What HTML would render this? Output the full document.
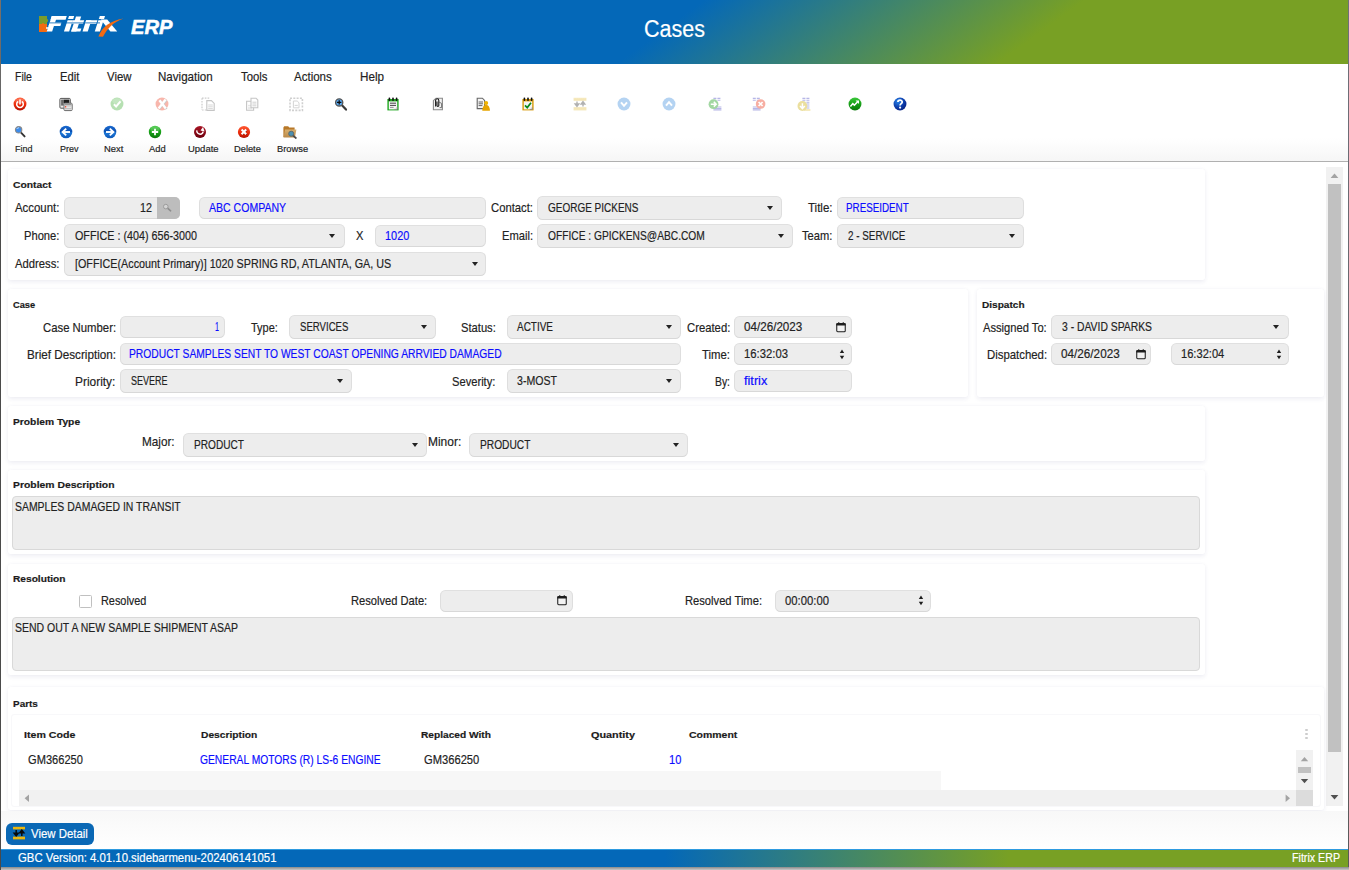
<!DOCTYPE html>
<html><head><meta charset="utf-8"><title>Cases</title>
<style>
html,body{margin:0;padding:0;}
body{width:1349px;height:870px;overflow:hidden;position:relative;background:#fff;
 font-family:"Liberation Sans",sans-serif;font-size:13px;color:#222;}
div,span,svg{position:absolute;box-sizing:border-box;}
svg{overflow:visible;}
.t{white-space:nowrap;display:block;line-height:16px;transform-origin:0 50%;-webkit-text-stroke:.18px currentColor;}
.hdr{background:linear-gradient(144deg,#0468b8 49%,#78a024 75.5%);}
.g{background:#fff;border-radius:2.5px;box-shadow:0 1.5px 4px rgba(40,40,110,.08),0 0 1px rgba(40,40,110,.04);}
.f{background:#ededed;border:1px solid #dedede;border-color:#e0e0e0 #dedede #d8d8d8 #dedede;border-radius:5.5px;}
.ta{background:#ededed;border:1px solid #d9d9d9;border-radius:4px;}
.arr{width:0;height:0;border-left:3.5px solid transparent;border-right:3.5px solid transparent;border-top:4px solid #222;}
</style></head><body>
<svg width="0" height="0" style="left:0;top:0"><defs>
<linearGradient id="gRed" x1="0" y1="0" x2="0" y2="1"><stop offset="0" stop-color="#ff5a34"/><stop offset=".6" stop-color="#e82808"/><stop offset="1" stop-color="#b01000"/></linearGradient>
<linearGradient id="gBlue" x1="0" y1="0" x2="0" y2="1"><stop offset="0" stop-color="#1a6ad0"/><stop offset=".5" stop-color="#0a4eb0"/><stop offset=".55" stop-color="#1c78d8"/><stop offset="1" stop-color="#0e58b8"/></linearGradient>
<linearGradient id="gGreen" x1="0" y1="0" x2="0" y2="1"><stop offset="0" stop-color="#3cc83c"/><stop offset=".5" stop-color="#18a018"/><stop offset="1" stop-color="#0a780a"/></linearGradient>
<linearGradient id="gDRed" x1="0" y1="0" x2="0" y2="1"><stop offset="0" stop-color="#a81424"/><stop offset="1" stop-color="#6c000c"/></linearGradient>
<radialGradient id="gHelp" cx=".35" cy=".3" r=".8"><stop offset="0" stop-color="#2a86ea"/><stop offset=".6" stop-color="#0c3aa8"/><stop offset="1" stop-color="#08207c"/></radialGradient>
<linearGradient id="gFold" x1="0" y1="0" x2="0" y2="1"><stop offset="0" stop-color="#d8b070"/><stop offset="1" stop-color="#b88848"/></linearGradient>
</defs></svg>
<div class="hdr" style="left:0px;top:0px;width:1349px;height:64px;"></div>
<span class="t" style="left:644.20px;top:20.6px;font-size:23.5px;color:#fff;transform:scaleX(0.9156);">Cases</span>
<div style="left:38.9px;top:16px;width:8.2px;height:8.1px;background:#7a9c2c;"></div>
<div style="left:38.9px;top:24.1px;width:8.2px;height:7.6px;background:#f26a12;"></div>
<div style="left:46.2px;top:19.2px;width:2.2px;height:2.4px;background:#7a9c2c;border-radius:1px;"></div>
<div style="left:45.6px;top:26.6px;width:2.2px;height:2.4px;background:#fff;border-radius:1px;"></div>
<div style="left:41.5px;top:22.8px;width:2.4px;height:2.2px;background:#f26a12;border-radius:1px;"></div>
<svg style="left:0;top:0" width="180" height="44" viewBox="0 0 180 44"><g transform="translate(51.8,16) skewX(-18)" fill="#fff"><rect x="0" y="0" width="5.4" height="15.6"/><rect x="0" y="0" width="15" height="3.8"/><rect x="0" y="6.5" width="11.8" height="3.4"/><rect x="17.2" y="0" width="5.2" height="2.9"/><rect x="17.2" y="4.3" width="5.2" height="11.3"/><rect x="24.4" y="0.6" width="5.2" height="15"/><rect x="22.2" y="4.3" width="11.6" height="3.4"/><rect x="24.4" y="12.4" width="9.2" height="3.2"/><rect x="35.8" y="4.3" width="5.2" height="11.3"/><rect x="35.8" y="4.3" width="11.2" height="3.7"/><rect x="48" y="0" width="5.2" height="2.9"/><rect x="48" y="4.3" width="5.2" height="11.3"/></g><path d="M100.6 19.6 H107.2 L117.2 31.6 H110.4 Z" fill="#fff"/><path d="M47 22.9 H100" stroke="#0468b8" stroke-width=".9" opacity=".9"/><path d="M98.4 36.6 C102 27 110 20.5 123.4 18.4 C113.5 22 107.5 28 103 36.8 Z" fill="#f26a12"/></svg>
<span class="t" style="left:131.40px;top:19.3px;font-size:20.8px;font-weight:700;font-style:italic;color:#fff;-webkit-text-stroke:.55px #fff;transform:scaleX(0.9685);">ERP</span>
<span class="t" style="left:15.30px;top:68.6px;transform:scaleX(0.8062);">File</span>
<span class="t" style="left:60.00px;top:68.6px;transform:scaleX(0.8619);">Edit</span>
<span class="t" style="left:106.70px;top:68.6px;transform:scaleX(0.8755);">View</span>
<span class="t" style="left:158.40px;top:68.6px;transform:scaleX(0.8905);">Navigation</span>
<span class="t" style="left:240.60px;top:68.6px;transform:scaleX(0.8697);">Tools</span>
<span class="t" style="left:294.20px;top:68.6px;transform:scaleX(0.8865);">Actions</span>
<span class="t" style="left:359.50px;top:68.6px;transform:scaleX(0.8973);">Help</span>
<div style="left:1px;top:138px;width:1347px;height:23px;background:linear-gradient(#fff,#f6f6f6);"></div>
<div style="left:0px;top:161px;width:1349px;height:1px;background:#b0b0b0;"></div>
<span class="t" style="left:14.70px;top:140.8px;font-size:9.7px;transform:scaleX(0.9276);">Find</span>
<span class="t" style="left:59.50px;top:140.8px;font-size:9.7px;transform:scaleX(0.9281);">Prev</span>
<span class="t" style="left:103.70px;top:140.8px;font-size:9.7px;transform:scaleX(0.9682);">Next</span>
<span class="t" style="left:149.20px;top:140.8px;font-size:9.7px;transform:scaleX(0.9672);">Add</span>
<span class="t" style="left:187.60px;top:140.8px;font-size:9.7px;transform:scaleX(0.9782);">Update</span>
<span class="t" style="left:233.80px;top:140.8px;font-size:9.7px;transform:scaleX(0.9596);">Delete</span>
<span class="t" style="left:276.60px;top:140.8px;font-size:9.7px;transform:scaleX(0.9645);">Browse</span>
<svg style="left:12.4px;top:96.3px;" width="16" height="16" viewBox="0 0 16 16"><circle cx="8" cy="8" r="6.45" fill="url(#gRed)"/><ellipse cx="8" cy="5" rx="4.6" ry="2.8" fill="#fff" opacity=".18"/><path d="M5.7 5.9 A3.3 3.3 0 1 0 10.3 5.9" stroke="#fff" stroke-width="1.5" fill="none" stroke-linecap="round"/><path d="M8 3.9 V8.1" stroke="#fff" stroke-width="1.5" stroke-linecap="round"/></svg>
<svg style="left:57.5px;top:96.3px;" width="16" height="16" viewBox="0 0 16 16"><rect x="1.9" y="2.4" width="10.4" height="9.8" rx="1" fill="#ececec" stroke="#555" stroke-width="1"/><rect x="3.1" y="3.6" width="2.6" height="6" fill="#6a6a6a"/><rect x="5.7" y="3.6" width="5.6" height="3.4" fill="#1c1c1c"/><rect x="6" y="7.2" width="8.2" height="7.4" rx="1" fill="#fafafa" stroke="#6a6a6a" stroke-width="1"/><rect x="6.5" y="7.7" width="7.2" height="1.8" fill="#9a9a9a"/><rect x="7" y="10.2" width="1.4" height="1.3" fill="#e03018"/><rect x="8.8" y="10.4" width="4.4" height=".9" fill="#bbb"/><rect x="7" y="12.4" width="6.2" height=".9" fill="#999"/></svg>
<svg style="left:109.2px;top:96.3px;opacity:0.55;" width="16" height="16" viewBox="0 0 16 16"><circle cx="8" cy="8" r="6.45" fill="#7cc874"/><ellipse cx="8" cy="5" rx="4.6" ry="2.8" fill="#fff" opacity=".18"/><path d="M4.9 8.3 L7.1 10.5 L11.5 5.3" stroke="#fff" stroke-width="2" fill="none"/></svg>
<svg style="left:154.4px;top:96.3px;opacity:0.45;" width="16" height="16" viewBox="0 0 16 16"><circle cx="8" cy="8" r="6.45" fill="#f06048"/><path d="M6.2 4.6 L12.6 13 M12.4 4 L5.4 12.8" stroke="#8a8a8a" stroke-width="2.2" fill="none"/><path d="M5.4 4.2 L11.8 12.6 M11.6 3.6 L4.6 12.4" stroke="#fff" stroke-width="2.4" fill="none"/></svg>
<svg style="left:199.5px;top:96.3px;opacity:0.42;" width="16" height="16" viewBox="0 0 16 16"><path d="M2 2.2 H10 M2 2.2 V14 M2 14 H6" stroke="#888" stroke-width="1.2" stroke-dasharray="1.6 1.2" fill="none"/><path d="M6.8 4.6 H11.4 L14.2 7.4 V14.4 H6.8 Z" fill="#fff" stroke="#777" stroke-width="1.1"/><path d="M8.2 9 H12.8 M8.2 10.8 H12.8 M8.2 12.6 H12.8" stroke="#999" stroke-width=".9"/></svg>
<svg style="left:244px;top:96.3px;opacity:0.42;" width="16" height="16" viewBox="0 0 16 16"><path d="M2.6 5.2 H8 L9.6 6.8 V14.2 H2.6 Z" fill="#fff" stroke="#777" stroke-width="1.1"/><path d="M4 9.4 H8.2 M4 11.2 H8.2 M4 12.8 H8.2" stroke="#aaa" stroke-width=".8"/><path d="M7 2.2 H12 L13.8 4 V11.8 H7 Z" fill="#fff" stroke="#777" stroke-width="1.1"/><path d="M8.4 6.2 H12.4 M8.4 8 H12.4 M8.4 9.8 H12.4" stroke="#888" stroke-width=".9"/></svg>
<svg style="left:288.4px;top:96.3px;opacity:0.4;" width="16" height="16" viewBox="0 0 16 16"><rect x="2" y="2.2" width="12.4" height="12.2" fill="none" stroke="#8a8a8a" stroke-width="1.6" stroke-dasharray="2 1.3"/><path d="M5.4 5 H9.2 L11 6.8 V11.8 H5.4 Z" fill="#fff" stroke="#999" stroke-width="1"/><path d="M6.6 9.4 H9.8" stroke="#999" stroke-width="1"/></svg>
<svg style="left:333.2px;top:96.3px;" width="16" height="16" viewBox="0 0 16 16"><path d="M9.2 9.6 L13 13.6" stroke="#3a3a3a" stroke-width="2.2" stroke-linecap="round"/><circle cx="6.2" cy="6.4" r="3.6" fill="#58a8f0" stroke="#555" stroke-width="1.3"/><path d="M6.2 4.2 V8.6 M4 6.4 H8.4" stroke="#0a0a0a" stroke-width="1.3"/></svg>
<svg style="left:385.2px;top:96.3px;" width="16" height="16" viewBox="0 0 16 16"><rect x="2.4" y="3" width="11.2" height="11.4" fill="#1ea81e"/><rect x="3.8" y="5.4" width="8.4" height="8" fill="#f4f4f4"/><rect x="3.6" y="1.4" width="1.6" height="3.6" rx=".7" fill="#111"/><rect x="7.2" y="1.4" width="1.6" height="3.6" rx=".7" fill="#111"/><rect x="10.8" y="1.4" width="1.6" height="3.6" rx=".7" fill="#111"/><path d="M5 7.2 H11 M5 9.4 H11" stroke="#444" stroke-width="1"/><path d="M5 11.4 H8.6" stroke="#888" stroke-width=".9"/><path d="M9.6 13.4 H12.2 V11" stroke="#888" stroke-width=".9" fill="none"/></svg>
<svg style="left:430.2px;top:96.3px;" width="16" height="16" viewBox="0 0 16 16"><path d="M3.4 4.6 L6 2.2 H12.4 V13.8 H3.4 Z" fill="#f2f2f2" stroke="#8a8a8a" stroke-width="1.1"/><path d="M5.6 10.6 V4.4 A1.6 1.6 0 0 1 8.8 4.4 V9.6 A.9 .9 0 0 1 7 9.6 V5.6" stroke="#1a1a1a" stroke-width="1.1" fill="none"/><path d="M9 6 L11.6 7.4 V11.6 H9.6" stroke="#666" stroke-width=".9" fill="none"/></svg>
<svg style="left:475.4px;top:96.3px;" width="16" height="16" viewBox="0 0 16 16"><path d="M2.2 2.2 H7.4 L9.6 4.4 V12.6 H2.2 Z" fill="#f6f6f6" stroke="#666" stroke-width="1.1"/><path d="M3.6 6 H8 M3.6 7.8 H8 M3.6 9.6 H7.4" stroke="#555" stroke-width=".9"/><circle cx="11.1" cy="7" r="2.1" fill="#f0b400"/><path d="M7.3 14.7 C7.3 11 9 8.8 11.1 8.8 C13.2 8.8 14.9 11 14.9 14.7 Z" fill="#e6a400"/></svg>
<svg style="left:520.4px;top:96.3px;" width="16" height="16" viewBox="0 0 16 16"><rect x="2.4" y="3" width="11.2" height="11.4" fill="#d89a08"/><rect x="3.8" y="5.4" width="8.4" height="8" fill="#f4f4f4"/><rect x="3.6" y="1.4" width="1.6" height="3.6" rx=".7" fill="#111"/><rect x="7.2" y="1.4" width="1.6" height="3.6" rx=".7" fill="#111"/><rect x="10.8" y="1.4" width="1.6" height="3.6" rx=".7" fill="#111"/><path d="M5 9.4 L7.2 11.6 L11 6.8" stroke="#0a8a1a" stroke-width="1.7" fill="none"/><path d="M9.8 13.4 H12.2 V11.4" stroke="#888" stroke-width=".9" fill="none"/></svg>
<svg style="left:571.5px;top:96.3px;opacity:0.45;" width="16" height="16" viewBox="0 0 16 16"><rect x="1.6" y="1.8" width="12.8" height="3" fill="#e8c860"/><rect x="1.6" y="11.2" width="12.8" height="3.2" fill="#e8c860"/><path d="M2.4 2.6 H13.6 M2.4 13.2 H13.6" stroke="#f4e090" stroke-width=".7" stroke-dasharray="1 1"/><path d="M5 5.4 V9 M3.2 8 L5 10.4 L6.8 8 Z M11 10.6 V7 M9.2 8 L11 5.6 L12.8 8 Z" stroke="#555" stroke-width="1.4" fill="#555"/></svg>
<svg style="left:616.4px;top:96.3px;opacity:0.55;" width="16" height="16" viewBox="0 0 16 16"><circle cx="8" cy="8" r="6.45" fill="#78b0e8"/><path d="M5 6.4 L8 9.8 L11 6.4" stroke="#fff" stroke-width="2" fill="none"/></svg>
<svg style="left:661.4px;top:96.3px;opacity:0.55;" width="16" height="16" viewBox="0 0 16 16"><circle cx="8" cy="8" r="6.45" fill="#78b0e8"/><path d="M5 9.6 L8 6.2 L11 9.6" stroke="#fff" stroke-width="2" fill="none"/></svg>
<svg style="left:706.5px;top:96.3px;opacity:0.5;" width="16" height="16" viewBox="0 0 16 16"><path d="M6.4 2.4 H14.4 M6.4 4.2 H14.4" stroke="#7070d0" stroke-width="1.1" stroke-dasharray="3 1"/><path d="M6.4 11 H14.4 M6.4 12.6 H14.4 M6.4 14 H14.4" stroke="#7070d0" stroke-width="1.1"/><circle cx="6.5" cy="8.2" r="4.9" fill="#48b048"/><path d="M3.8 8.2 H8.6 M6.8 5.8 L9.2 8.2 L6.8 10.6" stroke="#fff" stroke-width="1.5" fill="none"/></svg>
<svg style="left:751px;top:96.3px;opacity:0.5;" width="16" height="16" viewBox="0 0 16 16"><path d="M1.8 2.4 H9.6 M1.8 4.2 H9.6" stroke="#7070d0" stroke-width="1.1" stroke-dasharray="3 1"/><path d="M1.8 11 H9.6 M1.8 12.6 H9.6 M1.8 14 H9.6" stroke="#7070d0" stroke-width="1.1"/><circle cx="9.6" cy="8" r="4.8" fill="#f06048"/><path d="M7.6 6 L11.6 10 M11.6 6 L7.6 10" stroke="#fff" stroke-width="1.7"/></svg>
<svg style="left:795.5px;top:96.3px;opacity:0.5;" width="16" height="16" viewBox="0 0 16 16"><path d="M6.4 2.4 H14.4 M6.4 4.2 H14.4 M6.4 6.2 H14.4 M6.4 8 H14.4 M6.4 10 H14.4 M6.4 12 H14.4" stroke="#7070d0" stroke-width="1.1" stroke-dasharray="3 1"/><path d="M8 14 H14.4" stroke="#e0c030" stroke-width="1.2"/><circle cx="6.4" cy="10" r="4.9" fill="#d8c040"/><path d="M6.4 7.2 V12 M4 10 L6.4 12.6 L8.8 10" stroke="#fff" stroke-width="1.5" fill="none"/></svg>
<svg style="left:847.4px;top:96.3px;" width="16" height="16" viewBox="0 0 16 16"><circle cx="8" cy="8" r="6.45" fill="url(#gGreen)"/><path d="M3.4 10.4 L5.8 7.6 L7.4 9.2 L10.6 5.8" stroke="#fff" stroke-width="1.6" fill="none"/><path d="M8.6 4.6 H12 V8 Z" fill="#fff"/></svg>
<svg style="left:892.4px;top:96.3px;" width="16" height="16" viewBox="0 0 16 16"><circle cx="8" cy="8" r="6.45" fill="url(#gHelp)"/><path d="M5.9 6.1 C5.9 3.6 10.2 3.6 10.2 6 C10.2 7.6 8.1 7.6 8.1 9.4" stroke="#fff" stroke-width="1.8" fill="none"/><circle cx="8.1" cy="11.6" r="1.1" fill="#fff"/></svg>
<svg style="left:12.4px;top:123.7px;" width="16" height="16" viewBox="0 0 16 16"><path d="M8.8 8.4 L12.6 12.4" stroke="#333" stroke-width="1.9" stroke-linecap="round"/><circle cx="6.6" cy="5.8" r="3.2" fill="#3c8cec" stroke="#8a8a8a" stroke-width="1.1"/><path d="M4.8 5 A2 2 0 0 1 7 3.8" stroke="#bfe0ff" stroke-width=".9" fill="none"/></svg>
<svg style="left:57.7px;top:123.7px;" width="16" height="16" viewBox="0 0 16 16"><circle cx="8" cy="8" r="6.3" fill="url(#gBlue)"/><path d="M12 8 H5.4" stroke="#fff" stroke-width="1.9"/><path d="M8.2 4.6 L4.6 8 L8.2 11.4" stroke="#fff" stroke-width="1.9" fill="none"/></svg>
<svg style="left:102.4px;top:123.7px;" width="16" height="16" viewBox="0 0 16 16"><circle cx="8" cy="8" r="6.3" fill="url(#gBlue)"/><path d="M4 8 H10.6" stroke="#fff" stroke-width="1.9"/><path d="M7.8 4.6 L11.4 8 L7.8 11.4" stroke="#fff" stroke-width="1.9" fill="none"/></svg>
<svg style="left:147.1px;top:123.7px;" width="16" height="16" viewBox="0 0 16 16"><circle cx="8" cy="8" r="6.2" fill="url(#gGreen)"/><ellipse cx="8" cy="5" rx="4.6" ry="2.8" fill="#fff" opacity=".18"/><path d="M8 4.8 V11.2 M4.8 8 H11.2" stroke="#fff" stroke-width="1.8"/></svg>
<svg style="left:191.7px;top:123.7px;" width="16" height="16" viewBox="0 0 16 16"><circle cx="8" cy="8" r="6.0" fill="url(#gDRed)"/><path d="M4.9 6.3 A3.15 3.15 0 1 0 11.1 7.6" stroke="#fff" stroke-width="1.45" fill="none"/><path d="M8.5 6.5 L11 3.1 L12.6 7.5 Z" fill="#fff"/></svg>
<svg style="left:236.2px;top:123.7px;" width="16" height="16" viewBox="0 0 16 16"><circle cx="8" cy="8" r="6.1" fill="url(#gRed)"/><path d="M6.1 6.1 L10.7 10.7 M10.7 6.1 L6.1 10.7" stroke="#4a1000" stroke-width="1.9" opacity=".55"/><path d="M5.6 5.6 L10.2 10.2 M10.2 5.6 L5.6 10.2" stroke="#fff" stroke-width="2.1"/></svg>
<svg style="left:281.7px;top:123.7px;" width="16" height="16" viewBox="0 0 16 16"><path d="M1.4 3.4 L2.2 2.3 H6.2 L7.2 3.6 H12.6 V13 H1.4 Z" fill="#b87828"/><path d="M1.5 13.6 L3 5.4 H14.4 L12.9 13.6 Z" fill="url(#gFold)"/><path d="M10.8 11.4 L13.9 14" stroke="#4a4a4a" stroke-width="1.7" stroke-linecap="round"/><circle cx="9.2" cy="9.7" r="2.5" fill="#4a90b0" stroke="#5a6a70" stroke-width="1"/></svg>
<div style="left:1326px;top:167px;width:17px;height:639px;background:#f1f1f1;"></div>
<div style="left:1328px;top:184px;width:13px;height:568px;background:#c1c1c1;"></div>
<svg style="left:1326px;top:167px" width="17" height="17"><path d="M4.6 11 L8.5 6.6 L12.4 11 Z" fill="#a3a3a3"/></svg>
<svg style="left:1326px;top:789px" width="17" height="17"><path d="M4.6 6 L8.5 10.4 L12.4 6 Z" fill="#505050"/></svg>
<div class="g" style="left:7.5px;top:169.4px;width:1197.8px;height:110.6px;"></div>
<div class="g" style="left:7.5px;top:288.8px;width:960.9px;height:108.2px;"></div>
<div class="g" style="left:976.5px;top:288.8px;width:347.5px;height:108.2px;"></div>
<div class="g" style="left:7.5px;top:406.3px;width:1197.8px;height:55.1px;"></div>
<div class="g" style="left:7.5px;top:469.5px;width:1197.8px;height:84px;"></div>
<div class="g" style="left:7.5px;top:563.8px;width:1197.8px;height:111.2px;"></div>
<div class="g" style="left:7.5px;top:687px;width:1316.5px;height:122.5px;"></div>
<span class="t" style="left:12.80px;top:176.9px;font-size:9.7px;font-weight:700;color:#1b1b1b;transform:scaleX(1.0635);">Contact</span>
<span class="t" style="left:12.80px;top:296.9px;font-size:9.7px;font-weight:700;color:#1b1b1b;transform:scaleX(0.9576);">Case</span>
<span class="t" style="left:981.80px;top:296.9px;font-size:9.7px;font-weight:700;color:#1b1b1b;transform:scaleX(1.0401);">Dispatch</span>
<span class="t" style="left:12.80px;top:413.9px;font-size:9.7px;font-weight:700;color:#1b1b1b;transform:scaleX(1.0593);">Problem Type</span>
<span class="t" style="left:12.80px;top:477.1px;font-size:9.7px;font-weight:700;color:#1b1b1b;transform:scaleX(1.0710);">Problem Description</span>
<span class="t" style="left:12.80px;top:571.1px;font-size:9.7px;font-weight:700;color:#1b1b1b;transform:scaleX(1.0494);">Resolution</span>
<span class="t" style="left:12.80px;top:696.1px;font-size:9.7px;font-weight:700;color:#1b1b1b;transform:scaleX(1.0258);">Parts</span>
<span class="t" style="left:15.00px;top:199.8px;transform:scaleX(0.8780);">Account:</span>
<div class="f" style="left:64px;top:197px;width:116px;height:22px;"></div>
<div style="left:157px;top:197px;width:23px;height:22px;background:#bdbdbd;border-radius:0 5px 5px 0;"></div>
<svg style="left:160.4px;top:199.8px;" width="16" height="16" viewBox="0 0 16 16"><path d="M7.6 8.2 L10.6 10.8" stroke="#8e8e8e" stroke-width="1.7" stroke-linecap="round"/><circle cx="5.8" cy="6.6" r="2.3" fill="#d4d4d4" stroke="#9c9c9c" stroke-width="1"/></svg>
<span class="t" style="left:139.60px;top:199.8px;transform:scaleX(0.8297);">12</span>
<div class="f" style="left:199px;top:197px;width:287px;height:22px;"></div>
<span class="t" style="left:208.50px;top:199.8px;color:#0c0cff;transform:scaleX(0.8108);">ABC COMPANY</span>
<span class="t" style="left:491.40px;top:199.8px;transform:scaleX(0.8673);">Contact:</span>
<div class="f" style="left:537.4px;top:196.05px;width:244.4px;height:23.5px;"></div>
<span class="t" style="left:548.40px;top:199.8px;transform:scaleX(0.7677);">GEORGE PICKENS</span>
<div class="arr" style="left:766.7px;top:206px"></div>
<span class="t" style="left:807.90px;top:199.8px;transform:scaleX(0.8848);">Title:</span>
<div class="f" style="left:837.2px;top:197px;width:186.8px;height:22px;"></div>
<span class="t" style="left:846.40px;top:199.8px;color:#0c0cff;transform:scaleX(0.7548);">PRESEIDENT</span>
<span class="t" style="left:24.00px;top:227.9px;transform:scaleX(0.8590);">Phone:</span>
<div class="f" style="left:64px;top:224.15px;width:280.6px;height:23.5px;"></div>
<span class="t" style="left:74.70px;top:227.9px;transform:scaleX(0.8282);">OFFICE : (404) 656-3000</span>
<div class="arr" style="left:329.4px;top:234.1px"></div>
<span class="t" style="left:356.20px;top:227.9px;transform:scaleX(0.8528);">X</span>
<div class="f" style="left:375px;top:225px;width:111px;height:22px;"></div>
<span class="t" style="left:384.60px;top:227.9px;color:#0c0cff;transform:scaleX(0.8401);">1020</span>
<span class="t" style="left:502.40px;top:227.9px;transform:scaleX(0.8585);">Email:</span>
<div class="f" style="left:537.4px;top:224.15px;width:255.6px;height:23.5px;"></div>
<span class="t" style="left:548.40px;top:227.9px;transform:scaleX(0.7858);">OFFICE : GPICKENS@ABC.COM</span>
<div class="arr" style="left:778.1px;top:234.1px"></div>
<span class="t" style="left:802.20px;top:227.9px;transform:scaleX(0.8533);">Team:</span>
<div class="f" style="left:837.2px;top:224.15px;width:186.8px;height:23.5px;"></div>
<span class="t" style="left:847.70px;top:227.9px;transform:scaleX(0.7590);">2 - SERVICE</span>
<div class="arr" style="left:1009px;top:234.1px"></div>
<span class="t" style="left:15.00px;top:256px;transform:scaleX(0.8652);">Address:</span>
<div class="f" style="left:64px;top:252.25px;width:422px;height:23.5px;"></div>
<span class="t" style="left:74.70px;top:256px;transform:scaleX(0.8284);">[OFFICE(Account Primary)] 1020 SPRING RD, ATLANTA, GA, US</span>
<div class="arr" style="left:471.5px;top:262.2px"></div>
<span class="t" style="left:42.70px;top:319.6px;transform:scaleX(0.8721);">Case Number:</span>
<div class="f" style="left:120px;top:316px;width:105px;height:22px;"></div>
<span class="t" style="left:215.20px;top:319px;color:#0c0cff;transform:scaleX(0.5544);">1</span>
<span class="t" style="left:250.80px;top:319.6px;transform:scaleX(0.8432);">Type:</span>
<div class="f" style="left:289px;top:315.25px;width:147.2px;height:23.5px;"></div>
<span class="t" style="left:300.20px;top:319px;transform:scaleX(0.7387);">SERVICES</span>
<div class="arr" style="left:421.4px;top:325.2px"></div>
<span class="t" style="left:461.00px;top:319.6px;transform:scaleX(0.8601);">Status:</span>
<div class="f" style="left:507px;top:315.25px;width:173.6px;height:23.5px;"></div>
<span class="t" style="left:517.40px;top:319px;transform:scaleX(0.7666);">ACTIVE</span>
<div class="arr" style="left:666px;top:325.2px"></div>
<span class="t" style="left:686.90px;top:319.6px;transform:scaleX(0.8685);">Created:</span>
<div class="f" style="left:734.4px;top:316px;width:117.2px;height:22px;"></div>
<span class="t" style="left:743.60px;top:319px;transform:scaleX(0.8960);">04/26/2023</span>
<svg style="left:836.2px;top:321.8px" width="10" height="11" viewBox="0 0 10 11"><rect x=".75" y="1.6" width="8.5" height="8.1" rx="1" fill="#f2f2f2" stroke="#1d1d1d" stroke-width="1.05"/><rect x=".3" y="1.2" width="9.4" height="2.3" rx=".6" fill="#1d1d1d"/><rect x="2.2" y=".2" width="1.1" height="1.6" fill="#1d1d1d"/><rect x="6.7" y=".2" width="1.1" height="1.6" fill="#1d1d1d"/></svg>
<span class="t" style="left:26.70px;top:346.6px;transform:scaleX(0.9000);">Brief Description:</span>
<div class="f" style="left:120px;top:343px;width:560.6px;height:22px;"></div>
<span class="t" style="left:129.40px;top:346px;color:#0c0cff;transform:scaleX(0.7915);">PRODUCT SAMPLES SENT TO WEST COAST OPENING ARRVIED DAMAGED</span>
<span class="t" style="left:702.20px;top:346.6px;transform:scaleX(0.8747);">Time:</span>
<div class="f" style="left:734.4px;top:343px;width:117.2px;height:22px;"></div>
<span class="t" style="left:743.60px;top:346px;transform:scaleX(0.8695);">16:32:03</span>
<svg style="left:839px;top:348.8px" width="6" height="11" viewBox="0 0 6 11"><path d="M3 .6 L5.2 4 H.8 Z M3 10.2 L5.2 6.8 H.8 Z" fill="#1d1d1d"/></svg>
<span class="t" style="left:75.40px;top:373.6px;transform:scaleX(0.9167);">Priority:</span>
<div class="f" style="left:120px;top:369.25px;width:232px;height:23.5px;"></div>
<span class="t" style="left:130.80px;top:373px;transform:scaleX(0.6939);">SEVERE</span>
<div class="arr" style="left:336.8px;top:379.2px"></div>
<span class="t" style="left:452.40px;top:373.6px;transform:scaleX(0.8582);">Severity:</span>
<div class="f" style="left:507px;top:369.25px;width:173.6px;height:23.5px;"></div>
<span class="t" style="left:517.40px;top:373px;transform:scaleX(0.8145);">3-MOST</span>
<div class="arr" style="left:666px;top:379.2px"></div>
<span class="t" style="left:715.20px;top:373.6px;transform:scaleX(0.7985);">By:</span>
<div class="f" style="left:734.4px;top:370px;width:117.2px;height:22px;"></div>
<span class="t" style="left:743.60px;top:373px;color:#0c0cff;transform:scaleX(0.9781);">fitrix</span>
<span class="t" style="left:983.40px;top:319.6px;transform:scaleX(0.8585);">Assigned To:</span>
<div class="f" style="left:1051px;top:315.25px;width:237.6px;height:23.5px;"></div>
<span class="t" style="left:1061.80px;top:319px;transform:scaleX(0.7969);">3 - DAVID SPARKS</span>
<div class="arr" style="left:1273.4px;top:325.2px"></div>
<span class="t" style="left:987.00px;top:346.6px;transform:scaleX(0.8756);">Dispatched:</span>
<div class="f" style="left:1051px;top:343px;width:99.8px;height:22px;"></div>
<span class="t" style="left:1060.80px;top:346px;transform:scaleX(0.9022);">04/26/2023</span>
<svg style="left:1135.6px;top:348.8px" width="10" height="11" viewBox="0 0 10 11"><rect x=".75" y="1.6" width="8.5" height="8.1" rx="1" fill="#f2f2f2" stroke="#1d1d1d" stroke-width="1.05"/><rect x=".3" y="1.2" width="9.4" height="2.3" rx=".6" fill="#1d1d1d"/><rect x="2.2" y=".2" width="1.1" height="1.6" fill="#1d1d1d"/><rect x="6.7" y=".2" width="1.1" height="1.6" fill="#1d1d1d"/></svg>
<div class="f" style="left:1171px;top:343px;width:117.6px;height:22px;"></div>
<span class="t" style="left:1181.20px;top:346px;transform:scaleX(0.8557);">16:32:04</span>
<svg style="left:1276px;top:348.8px" width="6" height="11" viewBox="0 0 6 11"><path d="M3 .6 L5.2 4 H.8 Z M3 10.2 L5.2 6.8 H.8 Z" fill="#1d1d1d"/></svg>
<span class="t" style="left:141.80px;top:433.7px;transform:scaleX(0.9029);">Major:</span>
<div class="f" style="left:183px;top:433.25px;width:244px;height:23.5px;"></div>
<span class="t" style="left:193.50px;top:437px;transform:scaleX(0.7778);">PRODUCT</span>
<div class="arr" style="left:411.6px;top:443.2px"></div>
<span class="t" style="left:427.80px;top:433.7px;transform:scaleX(0.9195);">Minor:</span>
<div class="f" style="left:469px;top:433.25px;width:218.5px;height:23.5px;"></div>
<span class="t" style="left:480.00px;top:437px;transform:scaleX(0.7840);">PRODUCT</span>
<div class="arr" style="left:673.4px;top:443.2px"></div>
<div class="ta" style="left:12px;top:496px;width:1187.8px;height:53.6px;"></div>
<span class="t" style="left:15.40px;top:498.8px;transform:scaleX(0.8029);">SAMPLES DAMAGED IN TRANSIT</span>
<div style="left:79.4px;top:594.7px;width:13px;height:13px;background:#fff;border:1.4px solid #c0c0c0;border-radius:1.5px;"></div>
<span class="t" style="left:101.40px;top:592.8px;transform:scaleX(0.8375);">Resolved</span>
<span class="t" style="left:351.20px;top:592.8px;transform:scaleX(0.8573);">Resolved Date:</span>
<div class="f" style="left:440px;top:590px;width:132.8px;height:22px;"></div>
<svg style="left:557px;top:595.4px" width="10" height="11" viewBox="0 0 10 11"><rect x=".75" y="1.6" width="8.5" height="8.1" rx="1" fill="#f2f2f2" stroke="#1d1d1d" stroke-width="1.05"/><rect x=".3" y="1.2" width="9.4" height="2.3" rx=".6" fill="#1d1d1d"/><rect x="2.2" y=".2" width="1.1" height="1.6" fill="#1d1d1d"/><rect x="6.7" y=".2" width="1.1" height="1.6" fill="#1d1d1d"/></svg>
<span class="t" style="left:685.20px;top:592.8px;transform:scaleX(0.8594);">Resolved Time:</span>
<div class="f" style="left:775.2px;top:590px;width:155.6px;height:22px;"></div>
<span class="t" style="left:784.60px;top:592.8px;transform:scaleX(0.8695);">00:00:00</span>
<svg style="left:918.2px;top:595.2px" width="6" height="11" viewBox="0 0 6 11"><path d="M3 .6 L5.2 4 H.8 Z M3 10.2 L5.2 6.8 H.8 Z" fill="#1d1d1d"/></svg>
<div class="ta" style="left:12px;top:617px;width:1187.8px;height:53.6px;"></div>
<span class="t" style="left:15.40px;top:619.8px;transform:scaleX(0.8077);">SEND OUT A NEW SAMPLE SHIPMENT ASAP</span>
<div style="left:11px;top:713.5px;width:1309.5px;height:93.5px;border:1px solid #f8f8fa;border-radius:3px;"></div>
<span class="t" style="left:24.00px;top:727px;font-size:9.7px;font-weight:700;color:#1b1b1b;transform:scaleX(1.0960);">Item Code</span>
<span class="t" style="left:201.10px;top:727px;font-size:9.7px;font-weight:700;color:#1b1b1b;transform:scaleX(1.0572);">Description</span>
<span class="t" style="left:420.70px;top:727px;font-size:9.7px;font-weight:700;color:#1b1b1b;transform:scaleX(1.0489);">Replaced With</span>
<span class="t" style="left:590.50px;top:727px;font-size:9.7px;font-weight:700;color:#1b1b1b;transform:scaleX(1.1186);">Quantity</span>
<span class="t" style="left:689.20px;top:727px;font-size:9.7px;font-weight:700;color:#1b1b1b;transform:scaleX(1.0818);">Comment</span>
<span class="t" style="left:27.80px;top:751.6px;transform:scaleX(0.8536);">GM366250</span>
<span class="t" style="left:199.80px;top:751.6px;color:#0c0cff;transform:scaleX(0.7911);">GENERAL MOTORS (R) LS-6 ENGINE</span>
<span class="t" style="left:423.70px;top:751.6px;transform:scaleX(0.8598);">GM366250</span>
<span class="t" style="left:668.60px;top:751.6px;color:#0c0cff;transform:scaleX(0.8505);">10</span>
<div style="left:19px;top:771px;width:922px;height:19px;background:#f7f7f7;"></div>
<div style="left:19px;top:790px;width:1277px;height:16px;background:#f1f1f1;"></div>
<div style="left:1296px;top:790px;width:17px;height:16px;background:#dcdcdc;"></div>
<div style="left:1296px;top:750px;width:17px;height:40px;background:#f1f1f1;"></div>
<div style="left:1298px;top:767px;width:13px;height:6px;background:#c1c1c1;"></div>
<svg style="left:1296px;top:750px" width="17" height="40"><path d="M4.8 11.2 L8.5 7 L12.2 11.2 Z" fill="#a3a3a3"/><path d="M4.8 29 L8.5 33.2 L12.2 29 Z" fill="#505050"/></svg>
<svg style="left:19px;top:790px" width="16" height="16"><path d="M10 4.6 L5.6 8.3 L10 12 Z" fill="#a3a3a3"/></svg>
<svg style="left:1280px;top:790px" width="16" height="16"><path d="M5.6 4.6 L10 8.3 L5.6 12 Z" fill="#a3a3a3"/></svg>
<div style="left:1305.2px;top:729.1px;width:2.4px;height:2.4px;border-radius:50%;background:#cdcdcd;"></div>
<div style="left:1305.2px;top:733.1px;width:2.4px;height:2.4px;border-radius:50%;background:#cdcdcd;"></div>
<div style="left:1305.2px;top:737.1px;width:2.4px;height:2.4px;border-radius:50%;background:#cdcdcd;"></div>
<div style="left:1px;top:810.5px;width:1347px;height:38.5px;background:linear-gradient(#f8f8f8,#fff);"></div>
<div style="left:6px;top:823px;width:88.2px;height:22px;background:#0a68b5;border-radius:6px;"></div>
<svg style="left:11.1px;top:825.4px;" width="16" height="16" viewBox="0 0 16 16"><rect x="2" y="1.8" width="12" height="2.6" fill="#e8b000"/><rect x="2" y="11.6" width="12" height="2.8" fill="#e8b000"/><path d="M2.6 3 H13.4 M2.6 13 H13.4" stroke="#f8d860" stroke-width=".7" stroke-dasharray="1 1"/><path d="M5.2 5 V9.2 M3.2 8.2 L5.2 10.8 L7.2 8.2 Z M10.8 11 V6.8 M8.8 7.8 L10.8 5.2 L12.8 7.8 Z" stroke="#0a0a0a" stroke-width="1.5" fill="#0a0a0a"/></svg>
<span class="t" style="left:31.20px;top:825.9px;color:#fff;transform:scaleX(0.8765);">View Detail</span>
<div style="left:0px;top:849px;width:1349px;height:1px;background:#2f9be0;"></div>
<div style="left:0px;top:850px;width:1349px;height:17px;background:linear-gradient(90deg,#0468b8 0%,#0468b8 49.3%,#78a024 74.8%);"></div>
<span class="t" style="left:17.80px;top:849.9px;font-size:12px;color:#fff;transform:scaleX(0.9473);">GBC Version: 4.01.10.sidebarmenu-202406141051</span>
<span class="t" style="left:1292.00px;top:849.9px;font-size:12px;color:#fff;transform:scaleX(0.8889);">Fitrix ERP</span>
<div style="left:0px;top:867px;width:1349px;height:3px;background:linear-gradient(#8a8a8a,#c8c8c8);"></div>
<div style="left:0px;top:0px;width:1px;height:870px;background:linear-gradient(#7a7068 0,#666 10%,#4a4a4a 22%);"></div>
<div style="left:1348px;top:0px;width:1px;height:867px;background:linear-gradient(#70707a,#5a5a5a);"></div>
</body></html>
